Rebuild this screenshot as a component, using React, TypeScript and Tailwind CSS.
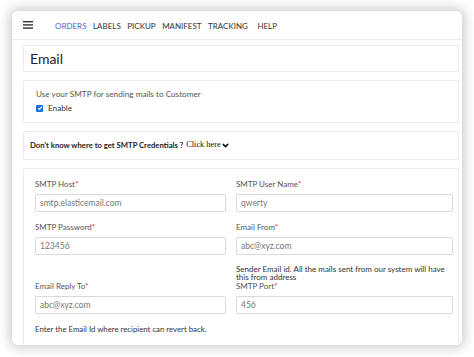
import { ChevronDown } from "lucide-react";

const NAV = ["ORDERS", "LABELS", "PICKUP", "MANIFEST", "TRACKING", "HELP"];

function Label({ text }: { text: string }) {
  return (
    <div className="text-[8px] leading-[10px] text-[#555]">
      {text}
      <span className="text-[#d33]">*</span>
    </div>
  );
}

function Input({ value }: { value: string }) {
  return (
    <div className="mt-[5px] flex h-[18px] items-center rounded-[2px] border border-[#d9d9d9] px-[4px] text-[8.5px] text-[#777]">
      {value}
    </div>
  );
}

export default function App() {
  return (
    <div className="h-[357px] w-[474px] bg-white pl-[12px] pt-[11px] font-['Lato',sans-serif]">
      {/* app window */}
      <div className="h-[334px] w-[450px] overflow-hidden rounded-[6px] bg-white shadow-[0_0_12px_3px_rgba(0,0,0,0.2)]">
        <nav className="flex h-[29px] items-center border-b border-[#eee] pl-[11px]">
          <svg width="11" height="8" viewBox="0 0 11 8" className="mt-[-1px]">
            <rect x="0" y="0" width="10" height="1.4" fill="#333" />
            <rect x="0" y="3.2" width="10" height="1.4" fill="#333" />
            <rect x="0" y="6.4" width="10" height="1.4" fill="#333" />
          </svg>
          <div className="ml-[21px] mt-[2px] flex gap-[6.5px] text-[8px] text-[#333]">
            {NAV.map((n, i) => (
              <span
                key={n}
                className={
                  i === 0
                    ? "text-[#5b63c7]"
                    : i === 5
                      ? "ml-[3px]"
                      : ""
                }
              >
                {n}
              </span>
            ))}
          </div>
        </nav>

        <div className="ml-[11px] mr-[3px] mt-[5px] flex flex-col gap-[8px]">
          <div className="flex h-[27px] items-center rounded-[2px] border border-[#eaeaea] px-[6px] text-[14px] text-[#222]">
            Email
          </div>

          <div className="h-[43px] rounded-[2px] border border-[#eaeaea] px-[12px] pt-[7px] text-[8.2px] text-[#555]">
            <div>Use your SMTP for sending mails to Customer</div>
            <label className="mt-[2px] flex items-center gap-[5px] text-[#333]">
              <span className="flex h-[7px] w-[7px] items-center justify-center rounded-[1px] bg-[#1976d2]">
                <svg width="6" height="6" viewBox="0 0 10 10">
                  <path d="M2 5.2 L4.2 7.4 L8.4 2.8" fill="none" stroke="white" strokeWidth="1.8" />
                </svg>
              </span>
              Enable
            </label>
          </div>

          <div className="flex h-[29px] items-center rounded-[2px] border border-[#eaeaea] px-[6px] text-[7.7px] font-bold text-[#222]">
            Don't know where to get SMTP Credentials ?
            <span className="ml-[3px] font-['Liberation_Serif',serif] text-[8.3px] font-normal text-[#111]">
              Click here
            </span>
            <ChevronDown size={9} strokeWidth={4} className="text-[#111]" />
          </div>

          <div className="h-[200px] rounded-[2px] border border-[#eaeaea] px-[11px] pt-[10px]">
            <div className="grid grid-cols-[191px_217px] gap-x-[10px]">
              <div>
                <Label text="SMTP Host" />
                <Input value="smtp.elasticemail.com" />
              </div>
              <div>
                <Label text="SMTP User Name" />
                <Input value="qwerty" />
              </div>
              <div className="mt-[10px]">
                <Label text="SMTP Password" />
                <Input value="123456" />
              </div>
              <div className="mt-[10px]">
                <Label text="Email From" />
                <Input value="abc@xyz.com" />
                <div className="mt-[11px] text-[8px] leading-[7.5px] text-[#333]">
                  Sender Email id. All the mails sent from our system will have this from address
                </div>
              </div>
              <div>
                <Label text="Email Reply To" />
                <Input value="abc@xyz.com" />
                <div className="mt-[10px] text-[7.8px] text-[#333]">
                  Enter the Email Id where recipient can revert back.
                </div>
              </div>
              <div>
                <Label text="SMTP Port" />
                <Input value="456" />
              </div>
            </div>
          </div>
        </div>
      </div>
    </div>
  );
}
